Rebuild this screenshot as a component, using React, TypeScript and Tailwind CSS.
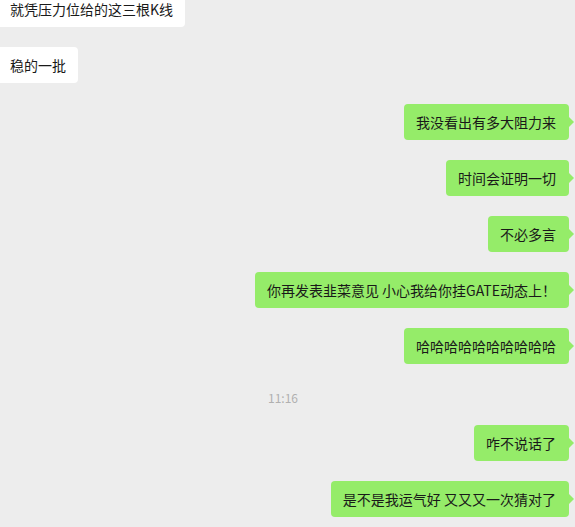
import React from "react";

type Msg =
  | { kind: "left"; text: string }
  | { kind: "right"; text: string }
  | { kind: "time"; text: string };

const messages: Msg[] = [
  { kind: "left", text: "就凭压力位给的这三根K线" },
  { kind: "left", text: "稳的一批" },
  { kind: "right", text: "我没看出有多大阻力来" },
  { kind: "right", text: "时间会证明一切" },
  { kind: "right", text: "不必多言" },
  { kind: "right", text: "你再发表韭菜意见 小心我给你挂GATE动态上！" },
  { kind: "right", text: "哈哈哈哈哈哈哈哈哈哈" },
  { kind: "time", text: "11:16" },
  { kind: "right", text: "咋不说话了" },
  { kind: "right", text: "是不是我运气好 又又又一次猜对了" },
];

const font = { fontFamily: '"Noto Sans CJK SC", "Liberation Sans", sans-serif' };

const App: React.FC = () => {
  return (
    <div
      className="w-[575px] h-[527px] overflow-hidden bg-[#ededed] text-[#191919]"
      style={font}
    >
      <div className="flex flex-col -mt-[9px]">
        {messages.map((m, i) => {
          if (m.kind === "time") {
            return (
              <div key={i} className="mt-[26px] h-4 pl-[268px] text-[12px] leading-4 text-[#b0b0b0]">
                {m.text}
              </div>
            );
          }
          if (m.kind === "left") {
            return (
              <div key={i} className={i === 0 ? "" : "mt-5"}>
                <div className="inline-block bg-white rounded-r-[4px] pl-2.5 pr-3 py-2 text-[14px] leading-5 whitespace-nowrap">
                  {m.text}
                </div>
              </div>
            );
          }
          const prev = messages[i - 1];
          const gap = prev.kind === "time" ? "mt-[19px]" : prev.kind === "left" ? "mt-[21px]" : "mt-5";
          return (
            <div key={i} className={"flex justify-end pr-[6px] " + gap}>
              <div className="relative bg-[#95ec69] rounded-[4px] pl-3 pr-[13px] py-2 text-[14px] leading-5 whitespace-nowrap">
                {m.text}
                {/* little tail on the right */}
                <span className="absolute top-1/2 -translate-y-1/2 -right-[5px] w-0 h-0 border-y-[5px] border-y-transparent border-l-[5px] border-l-[#95ec69]" />
              </div>
            </div>
          );
        })}
      </div>
    </div>
  );
};

export default App;
